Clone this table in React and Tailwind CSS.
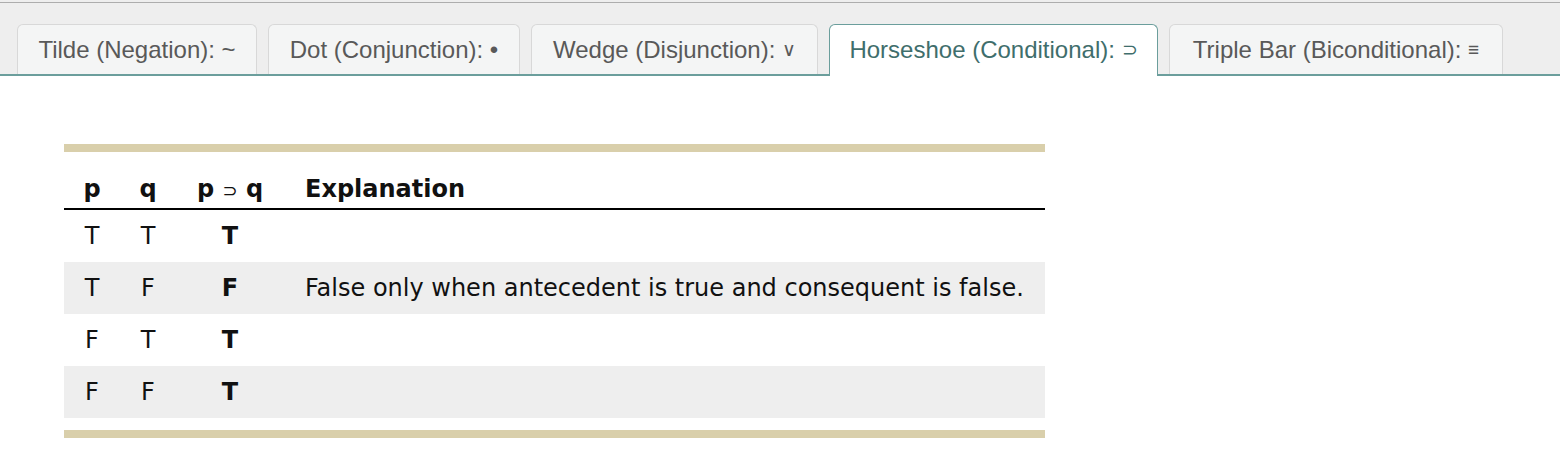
import React from "react";

const tabs = [
  { label: "Tilde (Negation): ", sym: "~", w: "w-[240px]" },
  { label: "Dot (Conjunction): ", sym: "•", w: "w-[252px]" },
  { label: "Wedge (Disjunction): ", sym: "∨", w: "w-[287px]", small: true },
  { label: "Horseshoe (Conditional): ", sym: "⊃", w: "w-[329px]", active: true, small: true },
  { label: "Triple Bar (Biconditional): ", sym: "≡", w: "w-[334px]", small: true },
];

const rows = [
  ["T", "T", "T", ""],
  ["T", "F", "F", "False only when antecedent is true and consequent is false."],
  ["F", "T", "T", ""],
  ["F", "F", "T", ""],
];

export default function App() {
  return (
    <div className="w-[1560px] h-[464px] bg-white overflow-hidden">
      <div className="h-[2px] bg-[#eeeeee]" />
      <div className="h-[1px] bg-[#adadad]" />
      <div
        className="flex items-end gap-[11px] pl-[17px] h-[73px] bg-[#eeeeee] border-b-2 border-[#6b9e9c]"
        style={{ fontFamily: '"Liberation Sans", Arial, sans-serif' }}
      >
        {tabs.map((t) => {
          const sym = t.small ? (
            <span className="text-[19px]">{t.sym}</span>
          ) : (
            <span>{t.sym}</span>
          );
          return t.active ? (
            <div
              key={t.label}
              className={`${t.w} h-[52px] -mb-[2px] bg-white border border-b-0 border-[#6b9e9c] rounded-t-[6px] flex items-center justify-center text-[24px] leading-[28px] text-[#3f6e6c] pb-[2px] whitespace-pre`}
            >
              {t.label}
              {sym}
            </div>
          ) : (
            <div
              key={t.label}
              className={`${t.w} h-[50px] bg-[#f4f5f5] border border-b-0 border-[#d8d8d8] rounded-t-[6px] flex items-center justify-center text-[24px] leading-[28px] text-[#595959] whitespace-pre`}
            >
              {t.label}
              {sym}
            </div>
          );
        })}
      </div>

      <div
        className="ml-[64px] mt-[68px] w-[981px] text-[24px] text-[#111]"
        style={{ fontFamily: '"DejaVu Sans", Verdana, sans-serif' }}
      >
        <div className="h-[8px] bg-[#d9cfab]" />
        <div className="grid grid-cols-[56px_56px_108px_1fr] h-[58px] overflow-hidden font-bold leading-[28px] pt-[23px] border-b-2 border-black">
          <div className="text-center">p</div>
          <div className="text-center">q</div>
          <div className="text-center whitespace-pre">
            p <span className="font-normal text-[18px] leading-none">⊃</span> q
          </div>
          <div className="pl-[21px]">Explanation</div>
        </div>
        {rows.map((r, i) => (
          <div
            key={i}
            className={`grid grid-cols-[56px_56px_108px_1fr] h-[52px] items-center leading-[28px] ${
              i % 2 === 1 ? "bg-[#eeeeee]" : "bg-white"
            }`}
          >
            <div className="text-center">{r[0]}</div>
            <div className="text-center">{r[1]}</div>
            <div className="text-center font-bold">{r[2]}</div>
            <div className="pl-[21px]">{r[3]}</div>
          </div>
        ))}
        <div className="h-[12px]" />
        <div className="h-[8px] bg-[#d9cfab]" />
      </div>
    </div>
  );
}
